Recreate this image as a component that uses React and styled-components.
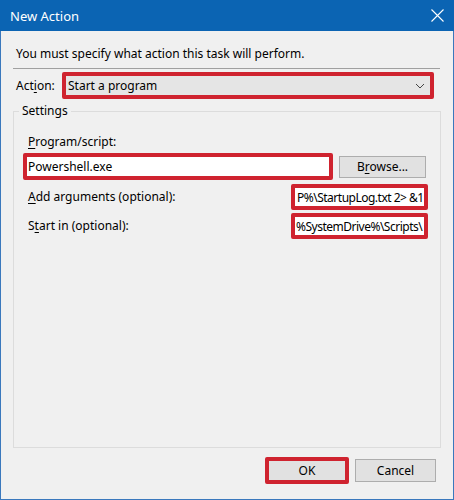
import React from "react";
import styled, { createGlobalStyle } from "styled-components";

const Global = createGlobalStyle`
  html, body { margin: 0; padding: 0; background: #f0f0f0; overflow: hidden; }
  * { box-sizing: border-box; }
`;

const FONT = `"Segoe UI", "Noto Sans", "Liberation Sans", sans-serif`;
const RED = "#cf232f";
const BLUE = "#0b64b3";

const Window = styled.div`
  width: 454px;
  height: 500px;
  display: flex;
  flex-direction: column;
  background: #f0f0f0;
  border: 1px solid #3a78bd;
  border-top: none;
  font-family: ${FONT};
  font-size: 12px;
  color: #000;
`;

const TitleBar = styled.div`
  height: 31px;
  margin: 0 -1px;
  background: ${BLUE};
  color: #fff;
  display: flex;
  align-items: center;
  justify-content: space-between;
  padding: 0 9px 0 10px;
  font-size: 13px;
`;

const Close = styled.svg`
  width: 13px;
  height: 13px;
  margin-right: 1px;
`;

const Content = styled.div`
  flex: 1;
  display: flex;
  flex-direction: column;
  padding: 15px 13px 15px 12px;
`;

const Intro = styled.div`
  line-height: 16px;
  padding-left: 3px;
`;

const Separator = styled.div`
  margin-top: 6px;
  height: 1px;
  background: #a0a0a0;
`;

const ActionRow = styled.div`
  margin-top: 3px;
  margin-right: 6px;
  display: grid;
  grid-template-columns: 49px 1fr;
  align-items: center;
`;

const Label = styled.span`
  line-height: 16px;
  padding-left: ${(p) => p.$indent || 0}px;
  white-space: nowrap;
`;

const U = styled.span`
  text-decoration: underline;
  text-underline-offset: 2px;
`;

const RedFrame = styled.div`
  border: 4px solid ${RED};
  border-radius: 2px;
  height: ${(p) => p.$h || 27}px;
  width: ${(p) => (p.$w ? `${p.$w}px` : "auto")};
  background: ${(p) => p.$bg || "#fff"};
  display: flex;
  align-items: center;
  overflow: hidden;
  white-space: nowrap;
  padding-left: ${(p) => p.$pad ?? 2}px;
  letter-spacing: ${(p) => (p.$tight ? "-0.5px" : "normal")};
`;

const ComboText = styled.span`
  flex: 1;
`;

const Chevron = styled.svg`
  width: 10px;
  height: 6px;
  margin-right: 5px;
`;

const Group = styled.fieldset`
  flex: 1;
  margin: 4px -1px 0 0;
  padding: 0;
  border: 1px solid #dcdcdc;
  display: flex;
  flex-direction: column;
`;

const Legend = styled.legend`
  margin-left: 5px;
  padding: 0 3px;
  line-height: 16px;
`;

const GroupBody = styled.div`
  padding: 15px 12px 0 9px;
  display: flex;
  flex-direction: column;
`;

const ProgramRow = styled.div`
  margin-top: 3px;
  display: flex;
  align-items: center;
  margin-right: 2px;
`;

const Button = styled.button`
  font-family: ${FONT};
  font-size: 12px;
  color: #000;
  background: #e1e1e1;
  border: 1px solid #adadad;
  width: ${(p) => p.$w}px;
  height: ${(p) => p.$h || 22}px;
  margin-left: ${(p) => p.$ml || 0}px;
  padding: 0;
`;

const FieldRow = styled.div`
  margin-top: ${(p) => p.$mt}px;
  display: flex;
  align-items: center;
  justify-content: space-between;
`;

const Footer = styled.div`
  margin-top: 9px;
  margin-right: 4px;
  display: flex;
  justify-content: flex-end;
  align-items: center;
  gap: 6px;
`;

const OkFrame = styled(RedFrame)`
  padding: 0;
  background: #e1e1e1;
  justify-content: center;
`;

export default function App() {
  return (
    <>
      <Global />
      <Window>
        <TitleBar>
          <span>New Action</span>
          <Close viewBox="0 0 13 13">
            <path d="M0.5 0.5 L12.5 12.5 M12.5 0.5 L0.5 12.5" stroke="#fff" strokeWidth="1.1" fill="none" />
          </Close>
        </TitleBar>
        <Content>
          <Intro>You must specify what action this task will perform.</Intro>
          <Separator />
          <ActionRow>
            <Label $indent={3}>
              Act<U>i</U>on:
            </Label>
            <RedFrame $bg="#e5e5e5" $pad={2}>
              <ComboText>Start a program</ComboText>
              <Chevron viewBox="0 0 10 6">
                <path d="M1 1 L5 5 L9 1" stroke="#444" strokeWidth="1" fill="none" />
              </Chevron>
            </RedFrame>
          </ActionRow>
          <Group>
            <Legend>Settings</Legend>
            <GroupBody>
              <Label $indent={5}>
                <U>P</U>rogram/script:
              </Label>
              <ProgramRow>
                <RedFrame $w={310} $pad={1}>Powershell.exe</RedFrame>
                <Button $w={87} $ml={6}>
                  B<U>r</U>owse...
                </Button>
              </ProgramRow>
              <FieldRow $mt={4}>
                <Label $indent={5}>
                  <U>A</U>dd arguments (optional):
                </Label>
                <RedFrame $w={137} $h={26} $pad={2} $tight>
                  P%\StartupLog.txt 2&gt; &amp;1
                </RedFrame>
              </FieldRow>
              <FieldRow $mt={3}>
                <Label $indent={5}>
                  S<U>t</U>art in (optional):
                </Label>
                <RedFrame $w={137} $h={26} $pad={1} $tight>
                  %SystemDrive%\Scripts\
                </RedFrame>
              </FieldRow>
            </GroupBody>
          </Group>
          <Footer>
            <OkFrame $w={84} $h={27}>OK</OkFrame>
            <Button $w={81} $h={23}>Cancel</Button>
          </Footer>
        </Content>
      </Window>
    </>
  );
}
